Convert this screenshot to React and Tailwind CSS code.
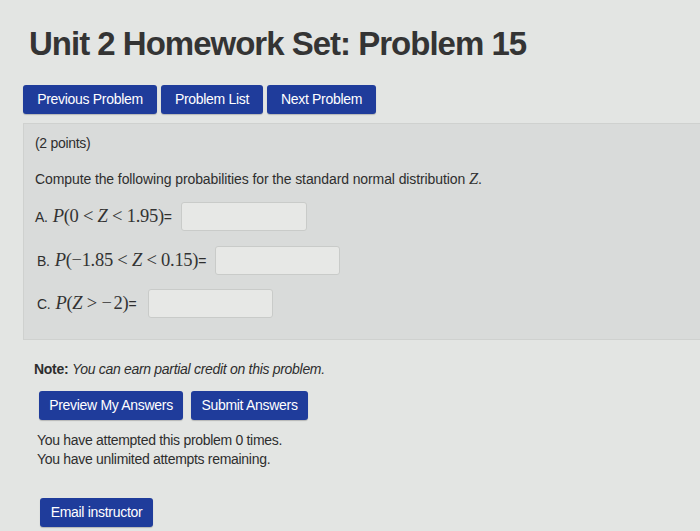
import React from "react";

const Btn = ({ children, className = "" }) => (
  <div className={`bg-[#1f3c9b] text-white text-[14px] tracking-[-0.3px] rounded-[3px] h-[29px] flex items-center justify-center shadow-[0_1px_1px_rgba(0,0,0,0.2)] ${className}`}>
    {children}
  </div>
);

const Input = ({ w = "w-[126px]" }) => (
  <div className={`${w} h-[29px] bg-[#e7e8e6] border border-[#c9cbc9] rounded-[3px]`} />
);

const M = ({ children }) => (
  <span className="font-['Liberation_Serif',serif] text-[18.5px] text-[#333]">{children}</span>
);

const R = ({ children }) => <span className="mx-[4.5px]">{children}</span>;

const Row = ({ label, math, gap, w, className = "" }) => (
  <div className={`flex items-center h-[29px] ${className}`}>
    <span className="text-[14px] tracking-[-0.3px] whitespace-nowrap">
      <span className="mr-[5px]">{label}</span>
      {math}
      <span>=</span>
    </span>
    <span className={gap} />
    <Input w={w} />
  </div>
);

export default function App() {
  return (
    <div className="w-[700px] h-[531px] overflow-hidden bg-[#e3e5e3] font-['Liberation_Sans',Arial,sans-serif] text-[#2e2e2e]">
      <div className="pl-[29px] pt-[24px]">
        <h1 className="text-[33px] font-bold leading-[40px] tracking-[-1px] text-[#343434]">
          Unit 2 Homework Set: Problem 15
        </h1>
      </div>
      <div className="flex gap-[4px] pl-[23px] mt-[21px]">
        <Btn className="w-[134px]">Previous Problem</Btn>
        <Btn className="w-[102px]">Problem List</Btn>
        <Btn className="w-[109px]">Next Problem</Btn>
      </div>
      <div className="ml-[23px] mt-[9px] h-[217px] bg-[#d9dbda] border border-[#cfd1cf] border-r-0 pl-[11px] pt-[10px]">
        <div className="text-[14px] tracking-[-0.3px] leading-[18px]">(2 points)</div>
        <div className="mt-[18px] text-[14px] tracking-[-0.1px] leading-[18px]">
          Compute the following probabilities for the standard normal distribution{" "}
          <span className="font-['Liberation_Serif',serif] text-[16.5px] text-[#333]"><i>Z</i></span>.
        </div>
        <Row
          className="mt-[14px]"
          label="A."
          math={<M><i>P</i>(0<R>&lt;</R><i>Z</i><R>&lt;</R>1.95)</M>}
          gap="w-[9px]"
          w="w-[126px]"
        />
        <Row
          className="mt-[15px] pl-[2px]"
          label="B."
          math={<M><i>P</i>(−1.85<R>&lt;</R><i>Z</i><R>&lt;</R>0.15)</M>}
          gap="w-[9px]"
          w="w-[125px]"
        />
        <Row
          className="mt-[14px] pl-[2px]"
          label="C."
          math={<M><i>P</i>(<i>Z</i><R>&gt;</R><span className="mr-[2px]">−</span>2)</M>}
          gap="w-[12px]"
          w="w-[125px]"
        />
      </div>
      <div className="pl-[34px] mt-[20px] text-[14px] tracking-[-0.3px] leading-[18px]">
        <b>Note:</b> <i>You can earn partial credit on this problem.</i>
      </div>
      <div className="flex gap-[8px] pl-[39px] mt-[13px]">
        <Btn className="w-[144px]">Preview My Answers</Btn>
        <Btn className="w-[117px]">Submit Answers</Btn>
      </div>
      <div className="pl-[37px] mt-[11px] text-[14px] tracking-[-0.3px] leading-[19px]">
        <div>You have attempted this problem 0 times.</div>
        <div>You have unlimited attempts remaining.</div>
      </div>
      <div className="pl-[40px] mt-[29px]">
        <Btn className="w-[113px] h-[28px]">Email instructor</Btn>
      </div>
    </div>
  );
}
